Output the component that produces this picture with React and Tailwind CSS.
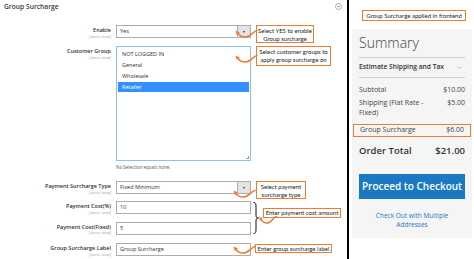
import { ChevronDown } from "lucide-react";

const Arrow = ({ className }) => (
  <svg className={`absolute ${className}`} width="24" height="10" viewBox="0 0 24 10" fill="none">
    <path d="M23 1.5 C19 2 17 8 11 8 C7.5 8 5.5 6.5 4 4.5" stroke="#ed7d31" strokeWidth="1.6" strokeLinecap="round" />
    <path d="M1.5 1.5 L2.6 6 L6 3.4 Z" fill="#ed7d31" />
  </svg>
);

const Note = ({ className = "", children }) => (
  <div className={`border border-[#ed7d31] bg-white text-center text-[6px] leading-[8px] text-[#222] font-['Lato',sans-serif] ${className}`}>
    {children}
  </div>
);

const Label = ({ children }) => (
  <div className="w-[111px] shrink-0 text-right pt-[3px] leading-none">
    <div className="text-[5.5px] font-semibold text-[#303030]">{children}</div>
    <div className="text-[4px] text-[#999] mt-[1px]">[store view]</div>
  </div>
);

const Select = ({ value }) => (
  <div className="w-[135px] h-[13px] shrink-0 border border-[#adadad] bg-white flex items-center">
    <span className="flex-1 pl-[3px] text-[5.5px] text-[#303030]">{value}</span>
    <span className="w-[13px] h-full bg-[#e3e3e3] border-l border-[#adadad] flex items-center justify-center">
      <span className="border-x-[1.5px] border-t-[2px] border-x-transparent border-t-[#333]" />
    </span>
  </div>
);

const Input = ({ value }) => (
  <div className="w-[135px] h-[13px] shrink-0 border border-[#adadad] bg-white flex items-center pl-[3px] text-[5.5px] text-[#303030]">
    {value}
  </div>
);

const Row = ({ label, children, className = "" }) => (
  <div className={`flex items-start gap-[5px] ${className}`}>
    <Label>{label}</Label>
    {children}
  </div>
);

export default function App() {
  return (
    <div className="w-[474px] h-[259px] bg-white flex overflow-hidden font-['Open_Sans',sans-serif]">
      {/* Admin config */}
      <div className="relative w-[347px] shrink-0">
        <div className="h-[25px] flex justify-between pl-[4px] pr-[5px] pt-[2px]">
          <span className="text-[6.7px] font-semibold text-[#41362f] leading-[9px]">Group Surcharge</span>
          <span className="mt-[1px] w-[7px] h-[7px] rounded-full border border-[#aaa] flex items-center justify-center">
            <span className="w-[3px] h-px bg-[#aaa]" />
          </span>
        </div>

        <Row label="Enable">
          <Select value="Yes" />
          <Note className="w-[58px] h-[18px] py-[1px]">Select YES to enable<br />Group surcharge</Note>
        </Row>

        <Row label="Customer Group" className="mt-[3px]">
          <div className="w-[135px] shrink-0">
            <div className="relative h-[115px] border border-[#8fc0ec] bg-white px-px pt-[1px] text-[5.5px] text-[#303030]">
              <div className="h-[11.3px] flex items-center pl-[4px]">NOT LOGGED IN</div>
              <div className="h-[11.3px] flex items-center pl-[4px]">General</div>
              <div className="h-[11.3px] flex items-center pl-[4px]">Wholesale</div>
              <div className="h-[10.5px] flex items-center pl-[4px] bg-[#3390ff] text-white">Retailer</div>
              <span className="absolute right-px bottom-px w-[3px] h-[3px] border-r border-b border-[#999]" />
            </div>
            <div className="mt-[3px] text-[4.5px] text-[#555] leading-[6px]">No Selection equals none.</div>
          </div>
          <Note className="w-[75px] h-[20px] py-[1px]">Select customer groups to<br />apply group surcharge on</Note>
        </Row>

        <Row label="Payment Surcharge Type" className="mt-[11px]">
          <Select value="Fixed Minimum" />
          <Note className="w-[50px] h-[18px] py-[1px]">Select payment<br />surcharge type</Note>
        </Row>

        <div className="mt-[2px] flex items-start">
          <div className="flex flex-col gap-[7px]">
            <Row label="Payment Cost(%)">
              <Input value="10" />
            </Row>
            <Row label="Payment Cost(Fixed)">
              <Input value="5" />
            </Row>
          </div>
          <svg className="ml-[2px] mt-px" width="6" height="32" viewBox="0 0 6 32" fill="none">
            <path d="M0.5 0.5 C3 0.5 3 2 3 5 L3 13 C3 15 3.5 16 5.5 16 C3.5 16 3 17 3 19 L3 27 C3 30 3 31.5 0.5 31.5" stroke="#111" strokeWidth="1" />
          </svg>
          <Note className="ml-[4px] mt-[7px] w-[78px] h-[10px] flex items-center justify-center">Enter payment cost amount</Note>
        </div>

        <Row label="Group Surcharge Label" className="mt-[8px]">
          <Input value="Group Surcharge" />
          <Note className="-ml-px mt-px w-[77px] h-[9px] flex items-center justify-center">Enter group surcharge label</Note>
        </Row>

        <Arrow className="left-[234px] top-[29px]" />
        <Arrow className="left-[234px] top-[54px]" />
        <Arrow className="left-[232px] top-[189px]" />
        <Arrow className="left-[258px] top-[215px] scale-x-[0.8] origin-left" />
        <Arrow className="left-[232px] top-[245px]" />
      </div>

      {/* Storefront summary */}
      <div className="flex-1 border-l-2 border-black pl-[3px] pr-[2px] pt-[10px]">
        <Note className="ml-[10px] w-[104px] h-[11px] flex items-center justify-center text-[5.5px]">Group Surcharge applied in frontend</Note>
        <div className="mt-[8px] h-[209px] bg-[#f5f5f5] px-[7px] pt-[7px] text-[#333]">
          <div className="text-[14px] font-light leading-[14px] text-[#444]">Summary</div>
          <div className="mt-[7px] h-[21px] border-y border-[#d1d1d1] flex items-center justify-between">
            <span className="text-[6.7px] font-semibold">Estimate Shipping and Tax</span>
            <ChevronDown size={7} strokeWidth={1.5} className="text-[#777] mr-[2px]" />
          </div>
          <div className="mt-[6px] h-[12px] flex items-center justify-between text-[7px] text-[#444]">
            <span>Subtotal</span>
            <span>$10.00</span>
          </div>
          <div className="mt-[2px] flex justify-between text-[7px] leading-[10px] text-[#444]">
            <span>Shipping (Flat Rate -<br />Fixed)</span>
            <span>$5.00</span>
          </div>
          <div className="mt-[6px] -mx-[6px] px-[6px] h-[13px] border border-[#ed7d31] flex items-center justify-between text-[7px] text-[#444]">
            <span>Group Surcharge</span>
            <span>$6.00</span>
          </div>
          <div className="mt-[7px] h-[14px] flex items-center justify-between text-[9.5px] font-semibold">
            <span>Order Total</span>
            <span>$21.00</span>
          </div>
          <button className="mt-[16px] w-full h-[25px] bg-[#1979c3] text-white text-[10px] font-semibold">
            Proceed to Checkout
          </button>
          <div className="mt-[12px] text-center text-[6.5px] leading-[9px] text-[#1979c3]">
            Check Out with Multiple<br />Addresses
          </div>
        </div>
      </div>
    </div>
  );
}
